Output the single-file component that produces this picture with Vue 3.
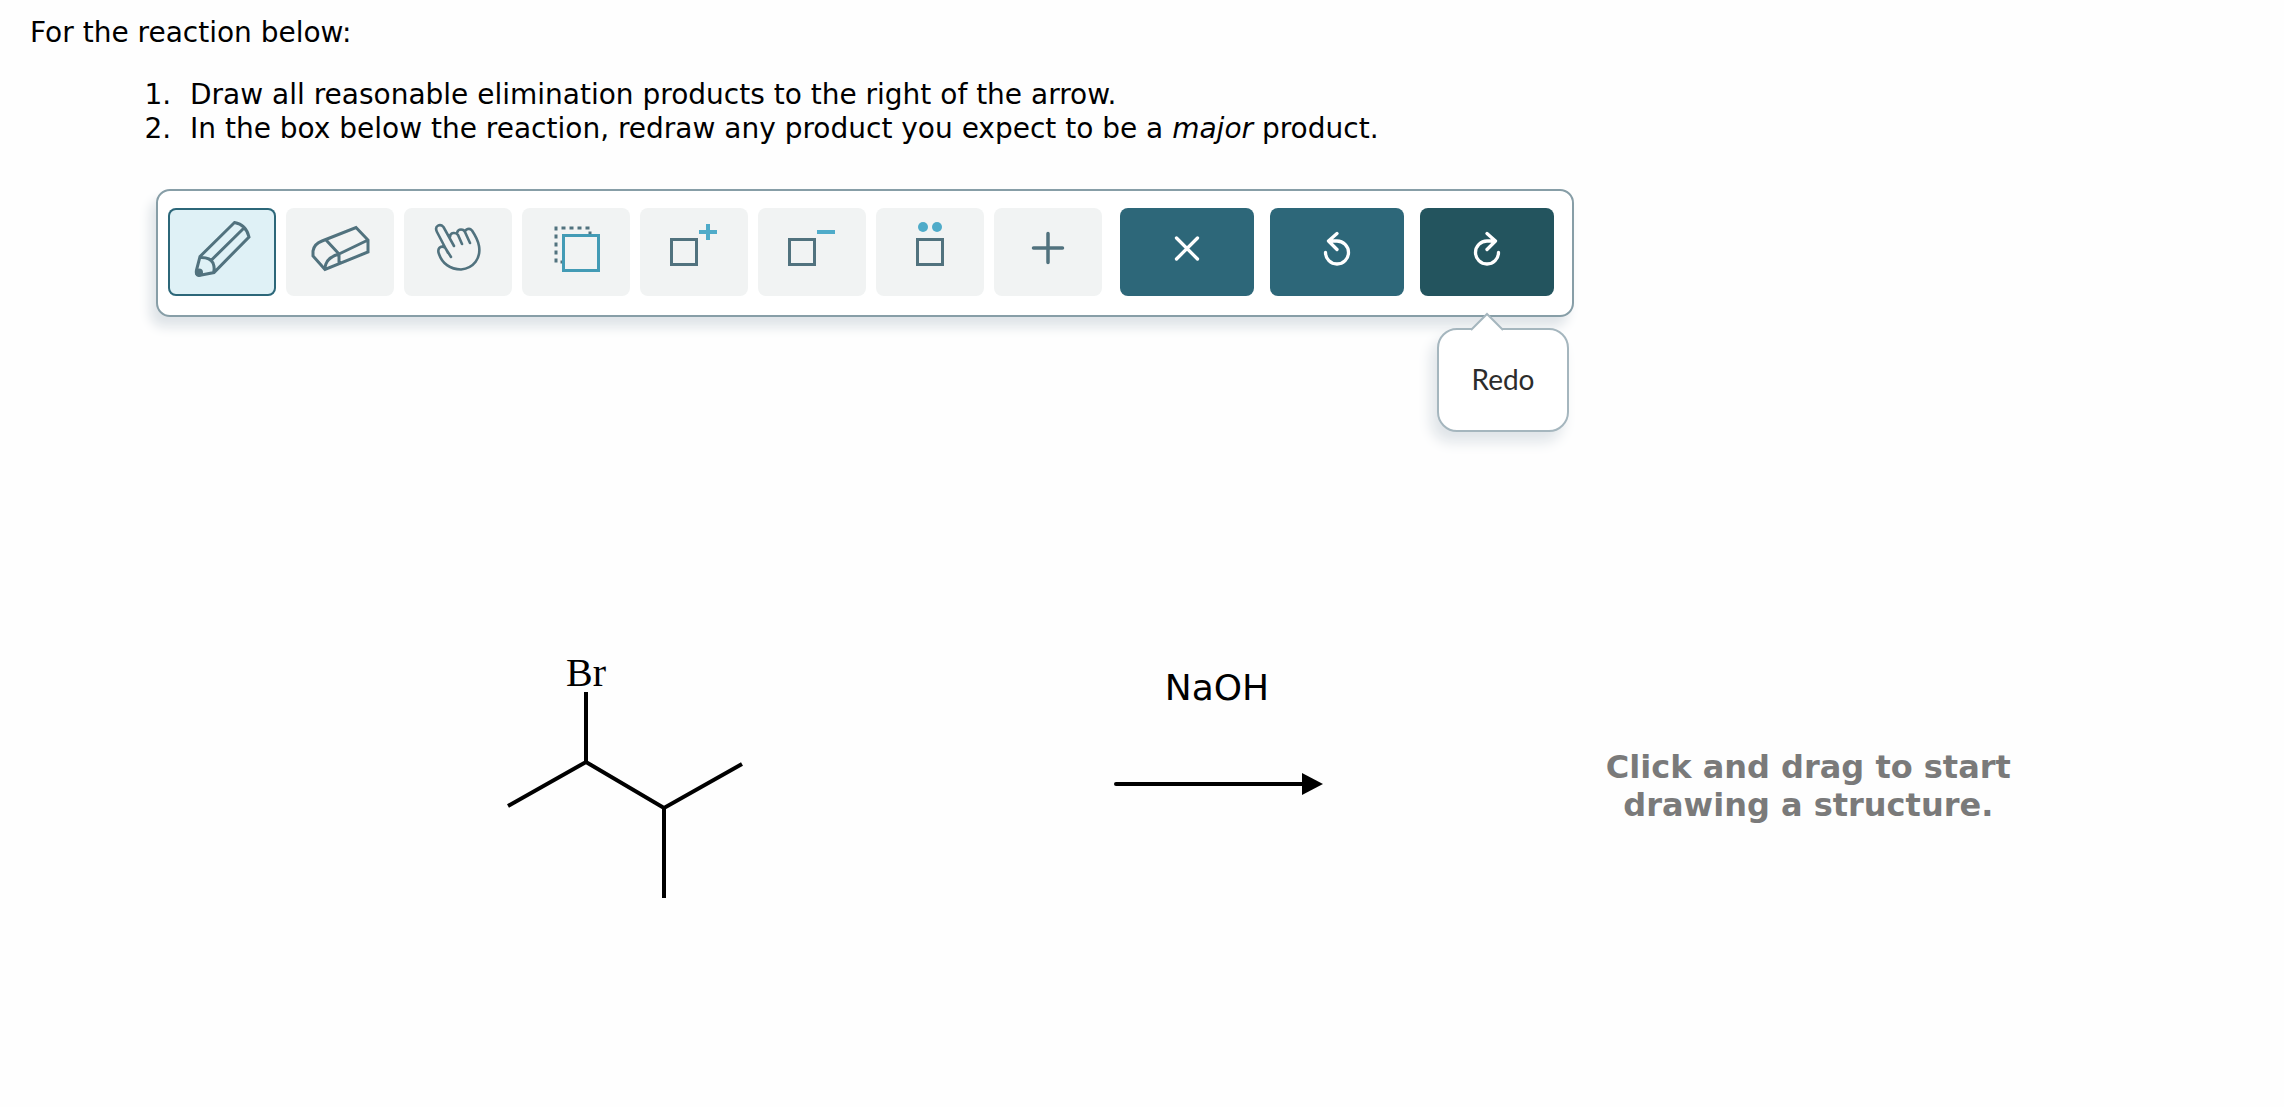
<template>
  <main class="question">
    <p class="intro">For the reaction below:</p>

    <ol class="steps">
      <li>Draw all reasonable elimination products to the right of the arrow.</li>
      <li>In the box below the reaction, redraw any product you expect to be a <em>major</em> product.</li>
    </ol>

    <div class="toolbar" role="toolbar" aria-label="Structure tools">
      <button
        v-for="t in tools"
        :key="t.id"
        type="button"
        :class="['tool', { active: t.id === activeTool }]"
        :aria-label="t.label"
        :aria-pressed="t.id === activeTool"
        @click="activeTool = t.id"
      >
        <svg viewBox="0 0 108 88">
          <g v-if="t.id === 'draw'">
            <path d="M32 48.500 66.500 14.500Q78 16.500 81 29L46 64.500 31 67.500Q27.500 67 28.500 62Z M32 49.500Q42 49 45 55Q47 60 45.500 64.500 M43.500 52 76 20" />
            <circle class="tip" cx="31" cy="64.500" r="4" />
          </g>
          <g v-else-if="t.id === 'erase'">
            <path d="M39 61.500 27 48V43Q28 36 36 33L70 19.500 82 32V44Z M40 32 53 46 82 32 M53 46V56 M53 46Q39 50 39 61" />
          </g>
          <g v-else-if="t.id === 'grab'" class="thin">
            <path d="M47 49 41 39.500C36 37 33 41 35 46C38 55 46 61.500 57 61.500C70 60 77 50 75 38C74 32 71 27 68 22.500C65 19 62 22 61 23 M50 38 39.500 19C36 15 30 18 33 24L44 45 M46 29C46 24 52 24 54 27L58 36 M53 25C54 20 60 21 61 24L66 35" />
          </g>
          <g v-else-if="t.id === 'select'">
            <path class="dash" d="M34 54.500V20H68V28 M38.500 54H42" />
            <rect class="blue" x="41.500" y="27.500" width="35" height="35" />
          </g>
          <g v-else-if="t.id === 'plus-charge'">
            <rect x="31.500" y="31.500" width="25" height="25" />
            <path class="sky" d="M59 24H77 M68 16V32" />
          </g>
          <g v-else-if="t.id === 'minus-charge'">
            <rect x="31.500" y="31.500" width="25" height="25" />
            <path class="sky" d="M59 24H77" />
          </g>
          <g v-else-if="t.id === 'lone-pair'">
            <circle class="dot" cx="47" cy="19" r="5" />
            <circle class="dot" cx="61" cy="19" r="5" />
            <rect x="41.500" y="31.500" width="25" height="25" />
          </g>
          <path v-else class="cross" d="M54 25.500V54.500 M39.500 40H68.500" />
        </svg>
      </button>

      <div class="commands">
        <button type="button" class="command" aria-label="Clear">
          <svg viewBox="0 0 134 88"><path d="M56.500 30 77.500 51 M77.500 30 56.500 51" /></svg>
        </button>
        <button type="button" class="command" aria-label="Undo">
          <svg viewBox="0 0 134 88"><path d="M55.500 44.500A11.500 11.500 0 1 0 67 33H59 M67 25.500 58.500 33 67 41.500" /></svg>
        </button>
        <button type="button" class="command hovered" aria-label="Redo" aria-describedby="redo-tip">
          <svg viewBox="0 0 134 88"><path d="M78.500 44.500A11.500 11.500 0 1 1 67 33H75 M67 25.500 75.500 33 67 41.500" /></svg>
        </button>
      </div>

      <div id="redo-tip" class="tooltip" role="tooltip">
        <svg class="pointer" viewBox="0 0 34 19"><path d="M1 18 17 2 33 18" /></svg>
        Redo
      </div>
    </div>

    <section class="reaction">
      <svg class="molecule" viewBox="0 0 240 260">
        <text x="80" y="46" text-anchor="middle">Br</text>
        <path d="M80 52V122 M2 166 80 122 158 168 236 124 M158 168V258" />
      </svg>

      <div class="step">
        <span class="reagent">NaOH</span>
        <svg class="arrow" viewBox="0 0 212 24">
          <path d="M5 12H192" />
          <polygon points="191,1 212,12 191,23" />
        </svg>
      </div>

      <p class="hint">Click and drag to start drawing a structure.</p>
    </section>
  </main>
</template>

<script setup>
import { ref } from 'vue'

const tools = [
  { id: 'draw', label: 'Draw' },
  { id: 'erase', label: 'Erase' },
  { id: 'grab', label: 'Move' },
  { id: 'select', label: 'Select' },
  { id: 'plus-charge', label: 'Positive charge' },
  { id: 'minus-charge', label: 'Negative charge' },
  { id: 'lone-pair', label: 'Lone pair' },
  { id: 'more', label: 'More' }
]

const activeTool = ref('draw')
</script>

<style>
body {
  margin: 0;
  background: #fefefe;
}
</style>

<style scoped>
.question {
  padding: 16px 30px;
  color: #000;
  font-family: Verdana, "DejaVu Sans", sans-serif;
  font-size: 28px;
  line-height: 34px;
}

.intro {
  margin: 0;
}

.steps {
  margin: 28px 0 0;
  padding-left: 150px;
}

.steps li {
  padding-left: 10px;
}

/* ===== toolbar ===== */
.toolbar {
  position: relative;
  display: flex;
  gap: 10px;
  box-sizing: border-box;
  width: fit-content;
  margin: 43px 0 0 126px;
  padding: 17px 18px 19px 10px;
  border: 2px solid #879ea7;
  border-radius: 14px;
  background: #fff;
  box-shadow: -6px 10px 12px #dfe4e8;
}

button {
  padding: 0;
  border: 0;
  border-radius: 8px;
  cursor: pointer;
}

svg {
  display: block;
  fill: none;
}

.tool {
  width: 108px;
  height: 88px;
  background: #f1f3f3;
}

.tool.active {
  background: #dff1f6;
  box-shadow: inset 0 0 0 2px #2c6779;
}

.tool svg {
  stroke: #51727e;
  stroke-width: 3;
}

.tool .thin {
  stroke-width: 2.6;
  stroke-linecap: round;
}

.tool .tip {
  fill: #51727e;
  stroke: none;
}

.tool .dash {
  stroke-dasharray: 4 4;
}

.tool .blue {
  stroke: #439bb5;
}

.tool .sky {
  stroke: #4fabc9;
  stroke-width: 4;
}

.tool .dot {
  fill: #4fabc9;
  stroke: none;
}

.tool .cross {
  stroke-width: 3.5;
  stroke-linecap: round;
}

.commands {
  display: flex;
  gap: 16px;
  margin-left: 8px;
}

.command {
  width: 134px;
  height: 88px;
  background: #2d6779;
}

.command.hovered {
  background: #23545e;
}

.command svg {
  stroke: #fff;
  stroke-width: 3.3;
  stroke-linecap: round;
  stroke-linejoin: round;
}

.tooltip {
  position: absolute;
  top: 137px;
  right: 3px;
  box-sizing: border-box;
  width: 132px;
  padding: 32px 0 34px;
  border: 2px solid #a5b6be;
  border-radius: 20px;
  background: #fff;
  box-shadow: -6px 10px 14px #dfe4e8;
  color: #2c2c2c;
  font-family: Lato, sans-serif;
  text-align: center;
}

.pointer {
  position: absolute;
  top: -18px;
  left: 31px;
  width: 34px;
  fill: #fff;
  stroke: #a5b6be;
  stroke-width: 2;
}

/* ===== reaction ===== */
.reaction {
  display: grid;
  grid-template-columns: repeat(3, 1fr);
  justify-items: center;
  margin: 323px 150px 0 300px;
}

.molecule {
  width: 240px;
}

.molecule text {
  fill: #000;
  font-family: "Liberation Serif", serif;
  font-size: 40px;
}

.molecule path {
  stroke: #000;
  stroke-width: 4;
}

.step {
  display: flex;
  flex-direction: column;
  align-items: center;
  gap: 64px;
  padding-top: 28px;
}

.reagent {
  font-size: 36px;
  line-height: 40px;
}

.arrow {
  width: 212px;
}

.arrow path {
  stroke: #000;
  stroke-width: 4;
  stroke-linecap: round;
}

.arrow polygon {
  fill: #000;
}

.hint {
  width: 420px;
  margin: 108px 0 0;
  color: #7a7a7a;
  font-size: 32px;
  font-weight: bold;
  line-height: 38px;
  text-align: center;
}
</style>
